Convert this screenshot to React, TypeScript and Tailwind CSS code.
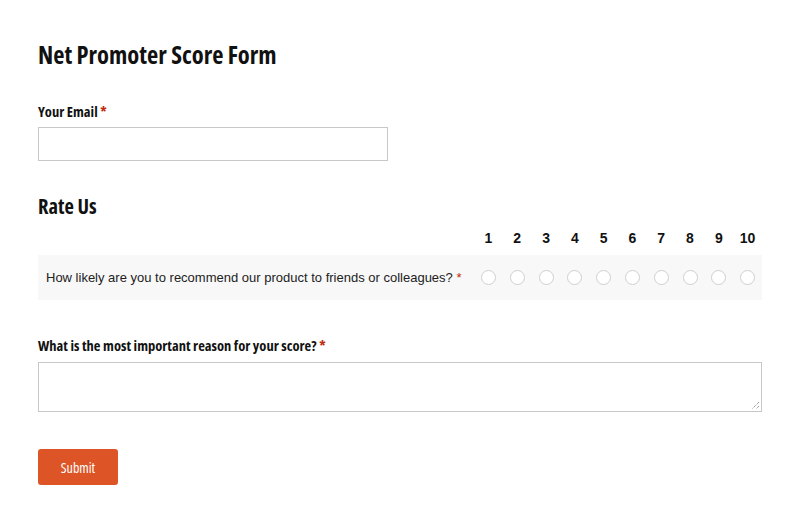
import React from "react";

const cond = "font-['Open_Sans',sans-serif] font-bold font-stretch-[75%]";

export default function App() {
  const nums = [1, 2, 3, 4, 5, 6, 7, 8, 9, 10];
  return (
    <div className="w-[800px] h-[523px] bg-white">
      <div className="pl-[38px] pr-[38px] pt-[40px]">
        <h1 className={`${cond} text-[24.5px] leading-[30px] text-[#111]`}>Net Promoter Score Form</h1>

        <div className="mt-[33px]">
          <label className={`${cond} block text-[14.5px] leading-[18px] text-[#111]`}>
            Your Email <span className="text-[#c02b0a]">*</span>
          </label>
          <div className="mt-[6px] w-[350px] h-[34px] border border-[#c8c8c8] bg-white" />
        </div>

        <h2 className={`${cond} mt-[32px] text-[20.5px] leading-[26px] text-[#111]`}>Rate Us</h2>

        <div className="mt-[7px]">
          <div className="flex h-[24px] items-center">
            <div className="flex-1" />
            {nums.map((n) => (
              <div
                key={n}
                className="w-[28.8px] text-center font-['Liberation_Sans',Arial,sans-serif] font-bold text-[14px] text-[#111]"
              >
                {n}
              </div>
            ))}
          </div>
          <div className="mt-[5px] flex h-[45px] items-center bg-[#f8f8f8]">
            <div className="flex-1 pl-[8px] font-['Liberation_Sans',Arial,sans-serif] text-[13px] text-[#222]">
              How likely are you to recommend our product to friends or colleagues?
              <span className="text-[#c02b0a]"> *</span>
            </div>
            {nums.map((n) => (
              <div key={n} className="w-[28.8px] flex justify-center">
                <span className="block w-[15px] h-[15px] rounded-full border border-[#cfcfcf] bg-white" />
              </div>
            ))}
          </div>
        </div>

        <div className="mt-[37px]">
          <label className={`${cond} block text-[14.5px] leading-[18px] text-[#111]`}>
            What is the most important reason for your score? <span className="text-[#c02b0a]">*</span>
          </label>
          <div className="relative mt-[7px] w-full h-[50px] border border-[#c8c8c8] bg-white">
            <svg className="absolute right-[1px] bottom-[1px]" width="9" height="9" viewBox="0 0 9 9">
              <line x1="8" y1="1" x2="1" y2="8" stroke="#777" strokeWidth="1" strokeDasharray="1 1" />
              <line x1="8" y1="5" x2="5" y2="8" stroke="#777" strokeWidth="1" strokeDasharray="1 1" />
            </svg>
          </div>
        </div>

        <button
          className={`mt-[37px] w-[80px] h-[36px] rounded-[3px] bg-[#dd5527] text-white font-['Open_Sans',sans-serif] font-stretch-[75%] text-[14px]`}
        >
          Submit
        </button>
      </div>
    </div>
  );
}
